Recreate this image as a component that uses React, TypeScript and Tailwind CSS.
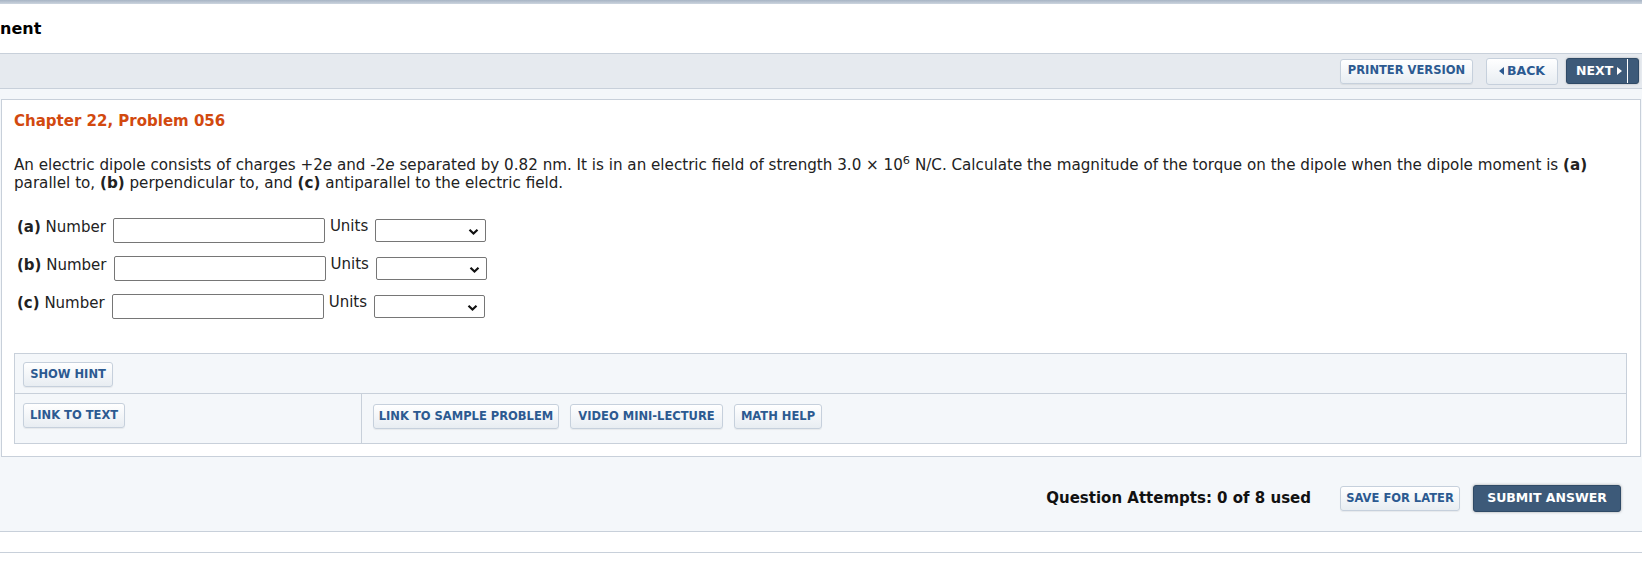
import React from 'react';

const LightButton: React.FC<{ label: string; className?: string }> = ({ label, className = '' }) => (
  <button
    className={`h-[25px] whitespace-nowrap rounded-[3px] border border-[#c6d0dc] bg-gradient-to-b from-white to-[#e8edf2] px-[4px] text-[11.5px] font-bold leading-none text-[#2c5a91] shadow-[0_1px_1px_rgba(0,0,0,0.06)] ${className}`}
  >
    {label}
  </button>
);

const Chevron = () => (
  <svg width="11" height="8" viewBox="0 0 11 8" className="mt-[2px]">
    <path d="M1.5 1.8 L5.5 5.6 L9.5 1.8" fill="none" stroke="#111" strokeWidth="2.2" />
  </svg>
);

const AnswerRow: React.FC<{ part: string }> = ({ part }) => (
  <div className="flex h-[38px] items-start pl-[3px]">
    <span className="leading-[16px] pt-[1px]">
      <b>({part})</b> Number
    </span>
    <div className="ml-[7px] h-[25px] w-[212px] rounded-[2px] border border-[#767676] bg-white" />
    <span className="ml-[5px] leading-[16px]">Units</span>
    <div className="ml-[7px] mt-[1px] flex h-[23px] w-[111px] items-center justify-end rounded-[2px] border border-[#767676] bg-white pr-[6px]">
      <Chevron />
    </div>
  </div>
);

export default function App() {
  return (
    <div className="h-[574px] w-[1642px] overflow-hidden bg-white font-['DejaVu_Sans','Verdana',sans-serif] text-[#222]">
      <div className="h-[4px] bg-gradient-to-b from-[#a7b4c4] to-[#cdd5df]" />
      <div className="flex h-[49px] items-center">
        <h1 className="text-[16px] font-bold leading-none text-black">nent</h1>
      </div>

      <div className="flex h-[36px] items-center justify-end border-y border-[#c8d0da] bg-[#e6eaef] pr-[3px]">
        <LightButton label="PRINTER VERSION" className="w-[133px]" />
        <button className="ml-[13px] flex h-[27px] w-[72px] items-center justify-center gap-[3px] rounded-[3px] border border-[#c6d0dc] bg-gradient-to-b from-white to-[#e8edf2] text-[12.5px] font-bold text-[#2c5a91]">
          <svg width="5" height="8" viewBox="0 0 5 8">
            <path d="M5 0 L0 4 L5 8 Z" fill="#2c5a91" />
          </svg>
          BACK
        </button>
        <button className="ml-[8px] flex h-[26px] w-[73px] items-center rounded-[3px] border border-[#2f4a66] bg-[#3d5a79] pl-[9px] text-[12.5px] font-bold text-white shadow-[0_0_2px_rgba(0,0,0,0.3)]">
          NEXT
          <svg width="5" height="8" viewBox="0 0 5 8" className="ml-[4px]">
            <path d="M0 0 L5 4 L0 8 Z" fill="#fff" />
          </svg>
          <span className="ml-[5px] h-full w-px bg-white" />
        </button>
      </div>

      <div className="bg-[#f4f7fa] pt-[10px]">
        <div className="mx-px border border-[#c8d0da] bg-white px-[12px] pb-[12px] pt-[12px]">
          <h2 className="text-[15px] font-bold leading-[18px] text-[#d2490f]">Chapter 22, Problem 056</h2>
          <p className="mt-[26px] text-[15.15px] leading-[18px]">
            An electric dipole consists of charges +2<i>e</i> and -2<i>e</i> separated by 0.82 nm. It is in an electric
            field of strength 3.0 × 10<sup>6</sup> N/C. Calculate the magnitude of the torque on the dipole when the
            dipole moment is <b>(a)</b>
            <br />
            parallel to, <b>(b)</b> perpendicular to, and <b>(c)</b> antiparallel to the electric field.
          </p>

          <div className="mt-[26px] text-[15px]">
            <AnswerRow part="a" />
            <AnswerRow part="b" />
            <AnswerRow part="c" />
          </div>

          <div className="mt-[21px] w-[1613px] border border-[#c8d0da] bg-[#f4f7fa]">
            <div className="h-[39px] pl-[8px] pt-[7px]">
              <LightButton label="SHOW HINT" className="w-[90px]" />
            </div>
            <div className="flex h-[50px] border-t border-[#c8d0da]">
              <div className="w-[347px] border-r border-[#c8d0da] pl-[8px] pt-[8px]">
                <LightButton label="LINK TO TEXT" className="w-[102px]" />
              </div>
              <div className="flex gap-[11px] pl-[11px] pt-[10px]">
                <LightButton label="LINK TO SAMPLE PROBLEM" className="w-[186px]" />
                <LightButton label="VIDEO MINI-LECTURE" className="w-[153px]" />
                <LightButton label="MATH HELP" className="w-[88px]" />
              </div>
            </div>
          </div>
        </div>

        <div className="flex h-[75px] items-center justify-end border-b border-[#c8d0da] pr-[21px] pt-[9px]">
          <span className="text-[15px] font-bold text-[#111]">Question Attempts: 0 of 8 used</span>
          <LightButton label="SAVE FOR LATER" className="ml-[29px] w-[120px]" />
          <button className="ml-[13px] h-[27px] w-[148px] whitespace-nowrap rounded-[3px] border border-[#2f4a66] bg-[#3d5a79] text-[12.5px] font-bold text-white shadow-[0_0_3px_rgba(0,0,0,0.35)]">
            SUBMIT ANSWER
          </button>
        </div>
      </div>

      <div className="h-[20px] bg-white" />
      <div className="border-t border-[#c8d0da]" />
    </div>
  );
}
